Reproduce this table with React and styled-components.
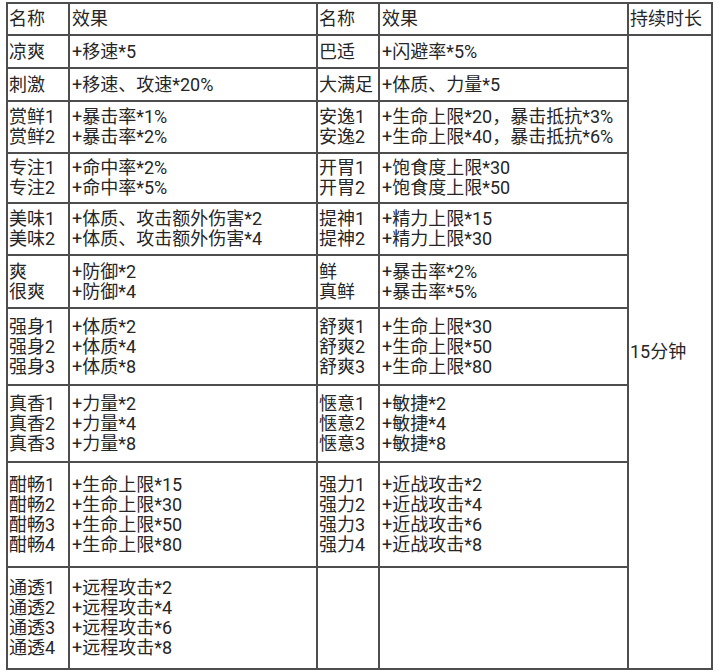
import React from "react";
import styled, { createGlobalStyle } from "styled-components";

const GlobalStyle = createGlobalStyle`
  html, body {
    margin: 0;
    padding: 0;
    background: #ffffff;
  }
  body {
    font-family: Roboto, "Noto Sans CJK SC", sans-serif;
  }
`;

const Page = styled.div`
  width: 720px;
  height: 672px;
  padding: 2px 0 0 6px;
  box-sizing: border-box;
  background: #fff;
`;

const Table = styled.div`
  display: grid;
  width: 707px;
  box-sizing: border-box;
  grid-template-columns: 60px 246px 60px 247px 82px;
  grid-template-rows: 30px 31px 31px 50px 48px 50px 51px 75px 75px 103px 100px;
  gap: 2px;
  padding: 2px;
  background: #4e4e4e;
`;

const Cell = styled.div`
  background: #fff;
  display: flex;
  flex-direction: column;
  justify-content: center;
  padding: 0 0 0 ${(p) => (p.$wide ? 2 : 1)}px;
  font-size: 18px;
  line-height: 20px;
  color: #262626;
  white-space: nowrap;
  overflow: hidden;
`;

const Duration = styled(Cell)`
  grid-column: 5;
  grid-row: 2 / -1;
`;

const rows = [
  [["凉爽"], ["+移速*5"], ["巴适"], ["+闪避率*5%"]],
  [["刺激"], ["+移速、攻速*20%"], ["大满足"], ["+体质、力量*5"]],
  [
    ["赏鲜1", "赏鲜2"],
    ["+暴击率*1%", "+暴击率*2%"],
    ["安逸1", "安逸2"],
    ["+生命上限*20，暴击抵抗*3%", "+生命上限*40，暴击抵抗*6%"],
  ],
  [
    ["专注1", "专注2"],
    ["+命中率*2%", "+命中率*5%"],
    ["开胃1", "开胃2"],
    ["+饱食度上限*30", "+饱食度上限*50"],
  ],
  [
    ["美味1", "美味2"],
    ["+体质、攻击额外伤害*2", "+体质、攻击额外伤害*4"],
    ["提神1", "提神2"],
    ["+精力上限*15", "+精力上限*30"],
  ],
  [
    ["爽", "很爽"],
    ["+防御*2", "+防御*4"],
    ["鲜", "真鲜"],
    ["+暴击率*2%", "+暴击率*5%"],
  ],
  [
    ["强身1", "强身2", "强身3"],
    ["+体质*2", "+体质*4", "+体质*8"],
    ["舒爽1", "舒爽2", "舒爽3"],
    ["+生命上限*30", "+生命上限*50", "+生命上限*80"],
  ],
  [
    ["真香1", "真香2", "真香3"],
    ["+力量*2", "+力量*4", "+力量*8"],
    ["惬意1", "惬意2", "惬意3"],
    ["+敏捷*2", "+敏捷*4", "+敏捷*8"],
  ],
  [
    ["酣畅1", "酣畅2", "酣畅3", "酣畅4"],
    ["+生命上限*15", "+生命上限*30", "+生命上限*50", "+生命上限*80"],
    ["强力1", "强力2", "强力3", "强力4"],
    ["+近战攻击*2", "+近战攻击*4", "+近战攻击*6", "+近战攻击*8"],
  ],
  [
    ["通透1", "通透2", "通透3", "通透4"],
    ["+远程攻击*2", "+远程攻击*4", "+远程攻击*6", "+远程攻击*8"],
    [],
    [],
  ],
];

const App = () => {
  return (
    <Page>
      <GlobalStyle />
      <Table>
        <Cell>名称</Cell>
        <Cell $wide>效果</Cell>
        <Cell>名称</Cell>
        <Cell $wide>效果</Cell>
        <Cell>持续时长</Cell>
        {rows.map((row, i) =>
          row.map((lines, j) => (
            <Cell key={`cell-${i}-${j}`} $wide={j % 2 === 1} style={{ gridColumn: j + 1 }}>
              {lines.map((line, k) => (
                <span key={`line-${i}-${j}-${k}`}>{line}</span>
              ))}
            </Cell>
          ))
        )}
        <Duration>15分钟</Duration>
      </Table>
    </Page>
  );
};

export default App;
